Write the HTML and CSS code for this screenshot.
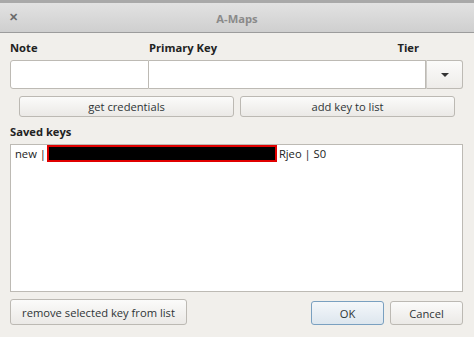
FILE: index.html
```html
<!DOCTYPE html>
<html>
<head>
<meta charset="utf-8">
<link rel="stylesheet" href="styles.css">
</head>
<body>
<div class="window">
  <div class="titlebar">
    <span class="close">✕</span>
    <span class="title">A-Maps</span>
  </div>
  <div class="content">
    <div class="labels">
      <span class="lbl note-l">Note</span>
      <span class="lbl key-l">Primary Key</span>
      <span class="lbl tier-l">Tier</span>
    </div>
    <div class="inputs">
      <div class="field note-f"></div>
      <div class="field key-f"></div>
      <div class="combo"><span class="arrow"></span></div>
    </div>
    <div class="btnrow">
      <button class="btn">get credentials</button>
      <button class="btn">add key to list</button>
    </div>
    <div class="lbl saved">Saved keys</div>
    <div class="list">
      <div class="item"><span>new |</span><span class="redact"></span><span>Rjeo | S0</span></div>
    </div>
    <div class="footer">
      <button class="btn remove">remove selected key from list</button>
      <div class="spacer"></div>
      <button class="btn ok">OK</button>
      <button class="btn cancel">Cancel</button>
    </div>
  </div>
</div>
</body>
</html>
```
FILE: styles.css
```css
* { box-sizing: border-box; }
html, body { margin: 0; padding: 0; }
body {
  width: 474px; height: 337px; overflow: hidden;
  background: #f1efeb;
  font-family: "Open Sans", "Noto Sans", sans-serif;
  font-size: 11.2px; color: #2e3436;
}
.window { display: flex; flex-direction: column; height: 337px; }
.titlebar {
  height: 33px;
  border-top: 3px solid #a9a9a9;
  background: linear-gradient(#e2e2e2, #cfcfcf);
  border-bottom: 1px solid #9c9c9c;
  position: relative;
  display: flex; align-items: center; justify-content: center;
}
.close {
  position: absolute; left: 9px; top: 6px;
  font-size: 11px; font-weight: bold; color: #6a6a6a;
}
.title { font-weight: bold; color: #8a8a8a; font-size: 11.2px; margin-top: 1px; }
.content { padding: 4px 11px 0 10px; display: flex; flex-direction: column; }
.lbl { font-weight: bold; font-size: 11.2px; color: #222; }
.labels { display: flex; height: 20px; align-items: center; }
.note-l { width: 139px; }
.key-l { flex: 1; }
.tier-l { margin-right: 44px; }
.inputs { display: flex; height: 29px; margin-top: 3px; }
.field { background: #fff; border: 1px solid #bdbab4; }
.note-f { width: 139px; border-radius: 3px 0 0 3px; }
.key-f { flex: 1; border-left: none; }
.combo {
  width: 37px; border: 1px solid #bdbab4; border-left: 1px solid #cfcdc9; border-radius: 0 3px 3px 0;
  background: linear-gradient(#fbfbfa, #eeece9);
  display: flex; align-items: center; justify-content: center;
}
.arrow { width: 0; height: 0; border-left: 4px solid transparent; border-right: 4px solid transparent; border-top: 4px solid #333; }
.btn {
  font-family: inherit; font-size: 11.2px; color: #2e3436;
  border: 1px solid #bcb9b3; border-radius: 3px;
  background: linear-gradient(#fbfbfa, #ebe9e6);
  padding: 0; margin: 0;
}
.btnrow { display: flex; gap: 6px; padding: 0 8px 0 9px; margin-top: 7px; }
.btnrow .btn { flex: 1; height: 21px; }
.saved { margin-top: 5px; height: 19px; display: flex; align-items: center; }
.list { height: 148px; background: #fff; border: 1px solid #bdbab4; margin-top: 3px; }
.item { display: flex; align-items: center; height: 17px; padding-left: 4px; color: #222; }
.redact { width: 230px; height: 17px; background: #000; border: 2px solid #e00000; margin: 0 2px 0 1px; }
.footer { display: flex; margin-top: 7px; align-items: flex-end; }
.remove { width: 177px; height: 26px; }
.spacer { flex: 1; }
.ok { width: 73px; height: 24px; border-color: #7aa0c0; background: linear-gradient(#f4f7fa, #dde6ee); }
.cancel { width: 73px; height: 24px; margin-left: 6px; }
```
